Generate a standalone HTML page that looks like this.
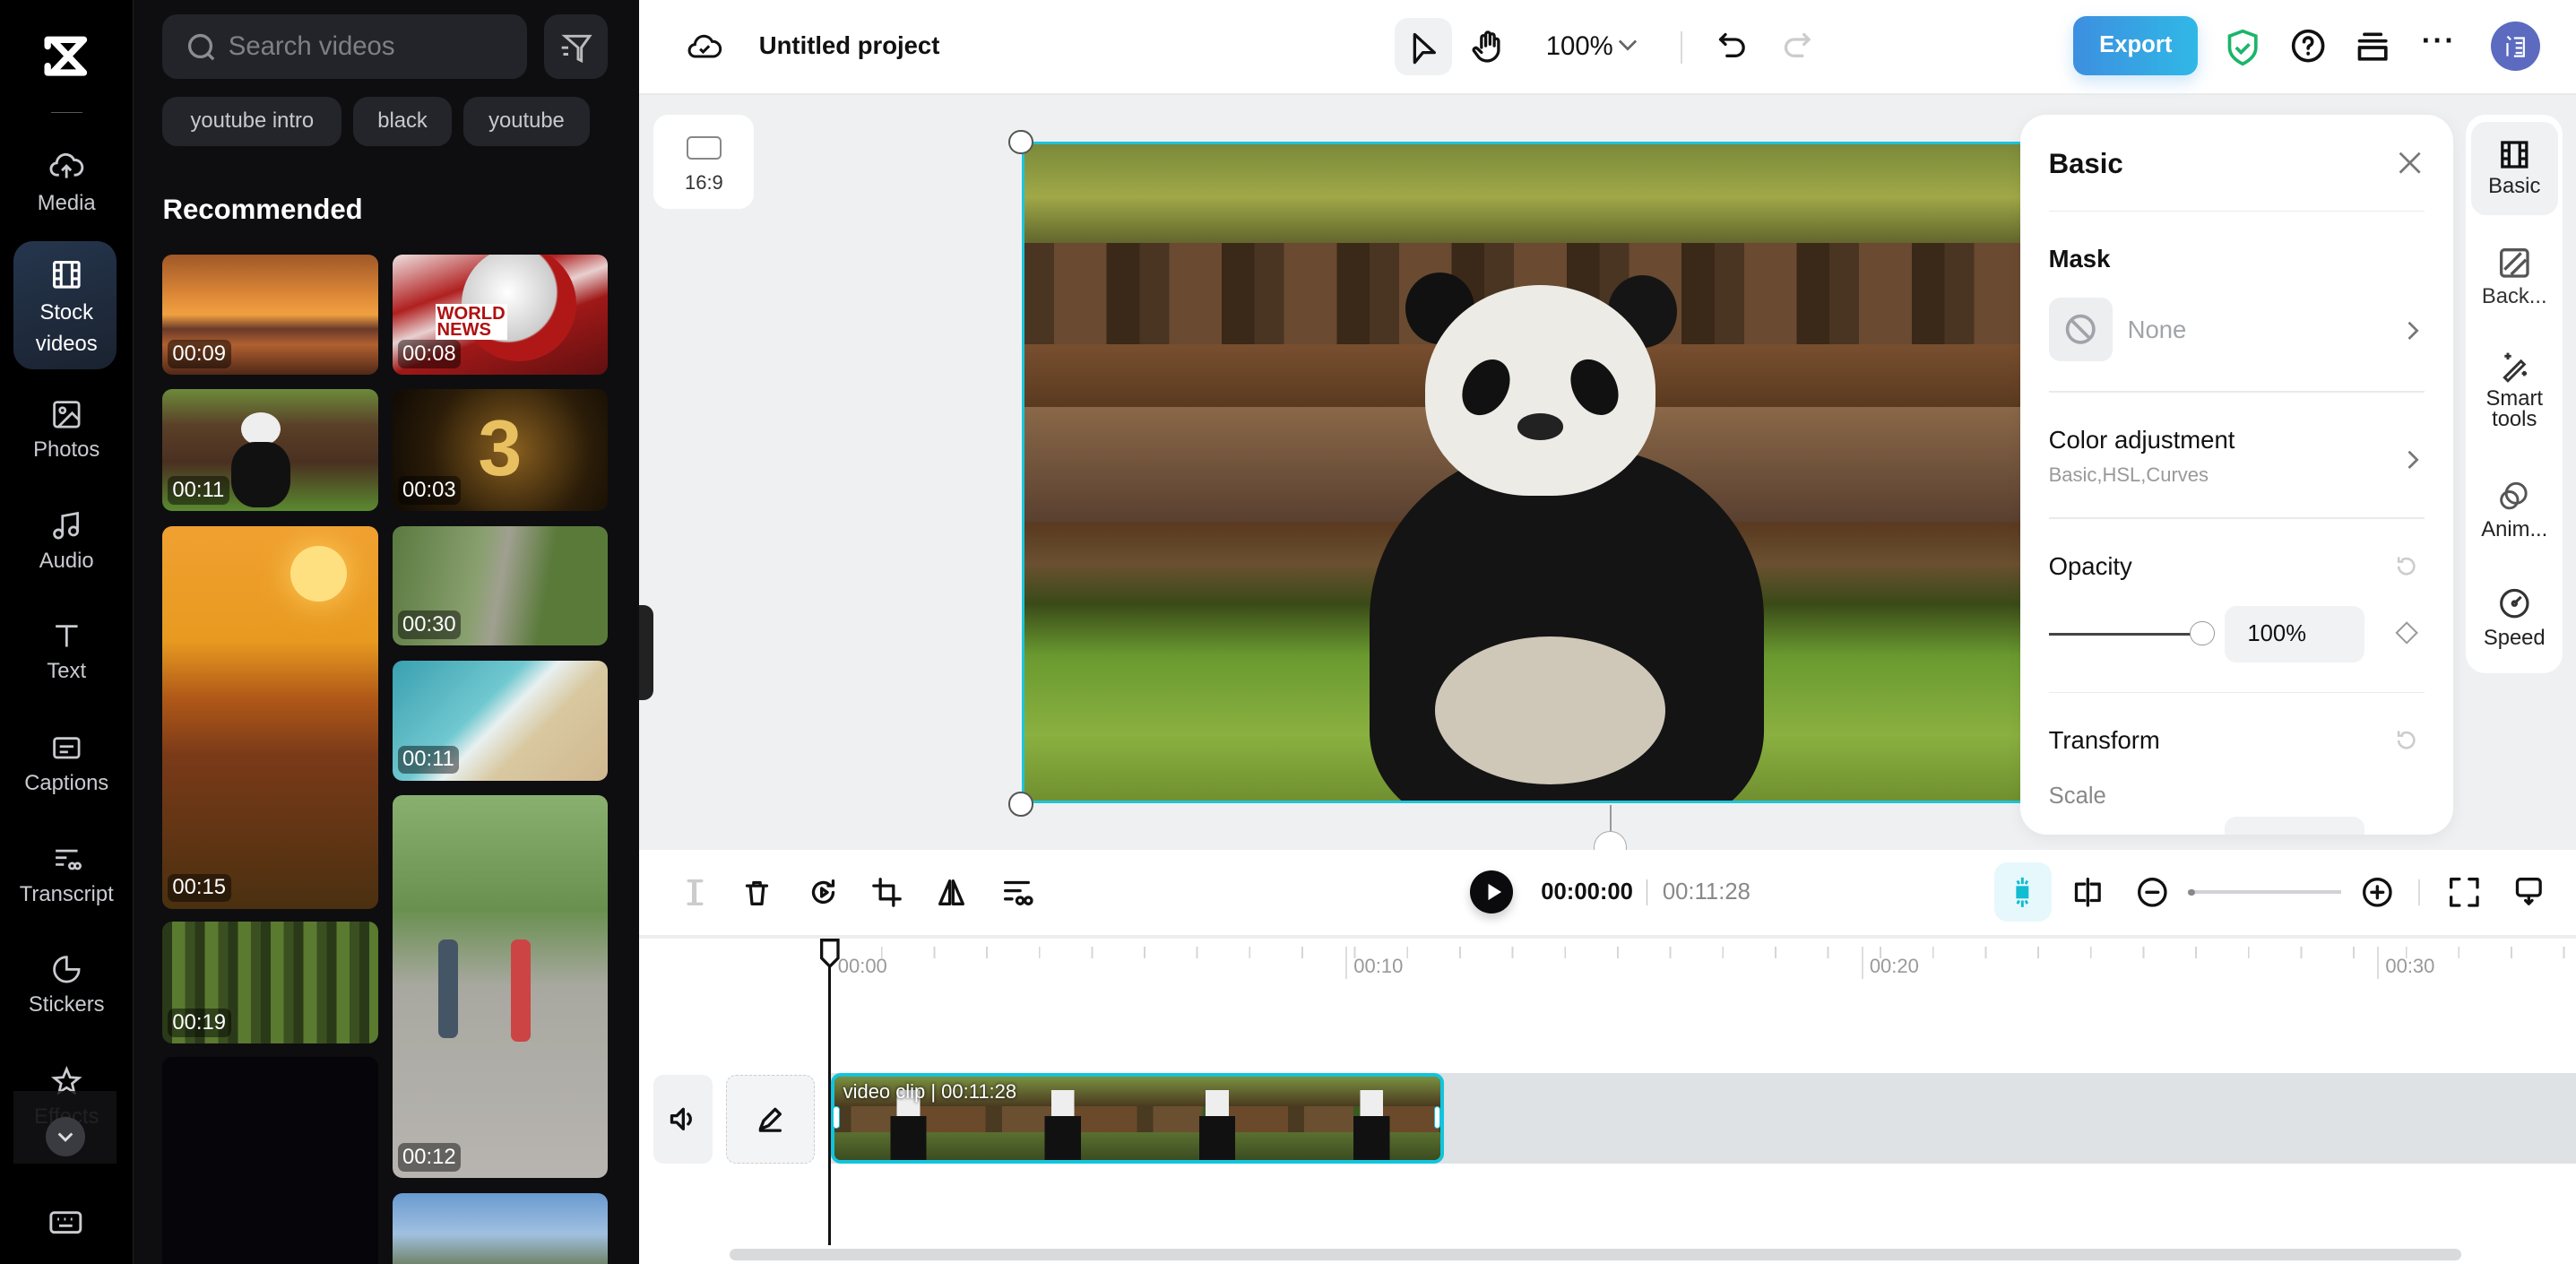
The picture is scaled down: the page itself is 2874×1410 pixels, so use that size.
<!DOCTYPE html>
<html><head><meta charset="utf-8"><style>
*{box-sizing:border-box;margin:0;padding:0}
html,body{width:2874px;height:1410px;overflow:hidden;background:#fff}
#r{position:absolute;left:0;top:0;width:1568px;height:769px;zoom:1.8329;font-family:"Liberation Sans",sans-serif;overflow:hidden}
.a{position:absolute}
.nav{color:#c9cbd0;font-size:13px;text-align:center;width:81px;left:0}
.nav svg{display:block;margin:0 auto 4px}
.chip{position:absolute;top:59px;height:30px;background:#24252b;border-radius:9px;color:#c7c9ce;font-size:13px;line-height:30px;text-align:center}
.th{position:absolute;border-radius:6px;overflow:hidden}
.th span{position:absolute;left:3px;bottom:4px;background:rgba(0,0,0,.45);color:#fff;font-size:13px;padding:1px 3px;border-radius:4px}
.ic{position:absolute;stroke:#111;fill:none;stroke-width:1.8;stroke-linecap:round;stroke-linejoin:round}
.sec{position:absolute;left:1247px;font-size:15px;font-weight:bold;color:#111}
.hr{position:absolute;left:1247px;width:229px;height:1px;background:#e9eaec}
.rt{position:absolute;left:1501px;width:59px;text-align:center;font-size:13px;color:#222}
.rt svg{display:block;margin:0 auto 3px}
.tl{position:absolute;top:581px;font-size:12px;color:#999}
</style></head><body><div id="r">
<!-- left nav -->
<div class="a" style="left:0;top:0;width:81px;height:769px;background:#000"></div>
<svg class="a" style="left:24px;top:20px" width="32" height="28" viewBox="0 0 32 28"><path d="M6 4h22L6 24h22M28 4L6 24" stroke="#fff" stroke-width="0" fill="none"/><path d="M5 4h22M5 24h22M8 4l19 20M27 4L8 24M5 4v4M5 20v4" stroke="#fff" stroke-width="4" fill="none" stroke-linecap="round" stroke-linejoin="round"/></svg>
<div class="a" style="left:31px;top:68px;width:19px;height:1px;background:#555"></div>
<div class="nav a" style="top:90px"><svg width="22" height="22" viewBox="0 0 24 24" fill="none" stroke="#c9cbd0" stroke-width="1.7"><path d="M7 18H6a4 4 0 0 1-.5-8A6 6 0 0 1 17 8a4.5 4.5 0 0 1 1 10h-1M12 20v-8M9 15l3-3 3 3"/></svg>Media</div>
<div class="a" style="left:8px;top:147px;width:63px;height:78px;border-radius:12px;background:linear-gradient(160deg,#25364d,#1a2230)"></div>
<div class="nav a" style="top:157px;color:#fff;line-height:19px"><svg width="20" height="20" viewBox="0 0 24 24" fill="none" stroke="#fff" stroke-width="2"><rect x="3" y="3" width="18" height="18" rx="1"/><path d="M8 3v18M16 3v18M3 9h5M3 15h5M16 9h5M16 15h5"/></svg>Stock<br>videos</div>
<div class="nav a" style="top:242px"><svg width="20" height="20" viewBox="0 0 24 24" fill="none" stroke="#c9cbd0" stroke-width="1.8"><rect x="3" y="3" width="18" height="18" rx="2"/><circle cx="9" cy="9" r="2"/><path d="M21 16l-5-5-10 10"/></svg>Photos</div>
<div class="nav a" style="top:310px"><svg width="20" height="20" viewBox="0 0 24 24" fill="none" stroke="#c9cbd0" stroke-width="1.8"><path d="M9 18V5l11-2v13"/><circle cx="6" cy="18" r="3"/><circle cx="17" cy="16" r="3"/></svg>Audio</div>
<div class="nav a" style="top:377px"><svg width="20" height="20" viewBox="0 0 24 24" fill="none" stroke="#c9cbd0" stroke-width="1.8"><path d="M4 5h16M12 5v15"/></svg>Text</div>
<div class="nav a" style="top:445px"><svg width="20" height="20" viewBox="0 0 24 24" fill="none" stroke="#c9cbd0" stroke-width="1.8"><rect x="3" y="5" width="18" height="14" rx="2"/><path d="M7 11h10M7 15h6"/></svg>Captions</div>
<div class="nav a" style="top:513px"><svg width="20" height="20" viewBox="0 0 24 24" fill="none" stroke="#c9cbd0" stroke-width="1.8"><path d="M4 6h16M4 11h8M4 16h6"/><circle cx="16" cy="17" r="2"/><circle cx="20" cy="17" r="2"/></svg>Transcript</div>
<div class="nav a" style="top:580px"><svg width="20" height="20" viewBox="0 0 24 24" fill="none" stroke="#c9cbd0" stroke-width="1.8"><path d="M12 3a9 9 0 1 0 9 9h-9z"/></svg>Stickers</div>
<div class="nav a" style="top:648px;color:#555"><svg width="20" height="20" viewBox="0 0 24 24" fill="none" stroke="#c9cbd0" stroke-width="1.8"><path d="M12 3l2.5 6 6.5.5-5 4 1.5 6.5-5.5-3.5-5.5 3.5 1.5-6.5-5-4 6.5-.5z"/></svg>Effects</div>
<div class="a" style="left:8px;top:664px;width:63px;height:44px;background:rgba(20,20,22,.8)"></div>
<div class="a" style="left:28px;top:680px;width:24px;height:24px;border-radius:50%;background:#3a3b40"></div>
<svg class="a" style="left:34px;top:687px" width="12" height="10" viewBox="0 0 12 10"><path d="M2 3l4 4 4-4" stroke="#ddd" stroke-width="1.6" fill="none"/></svg>
<svg class="a" style="left:30px;top:736px" width="20" height="16" viewBox="0 0 20 16" fill="none" stroke="#c9cbd0" stroke-width="1.6"><rect x="1" y="2" width="18" height="12" rx="2"/><path d="M5 6h1M9 6h1M13 6h1M6 10h8"/></svg>
<!-- panel -->
<div class="a" style="left:81px;top:0;width:308px;height:769px;background:#0e0e10;border-left:1px solid #222"></div>
<div class="a" style="left:99px;top:9px;width:222px;height:39px;background:#232429;border-radius:9px"></div>
<svg class="a" style="left:113px;top:19px" width="20" height="20" viewBox="0 0 20 20" fill="none" stroke="#8b8d93" stroke-width="1.8"><circle cx="9" cy="9" r="6.5"/><path d="M14 14l3 3"/></svg>
<div class="a" style="left:139px;top:19px;font-size:16px;color:#7d8088">Search videos</div>
<div class="a" style="left:331px;top:9px;width:39px;height:39px;background:#232429;border-radius:9px"></div>
<svg class="a" style="left:340px;top:18px" width="22" height="22" viewBox="0 0 22 22" fill="none" stroke="#bbb" stroke-width="1.6"><path d="M4 4h15l-5 7v8l-2-1v-7zM2 11h4M3 15h3"/></svg>
<div class="chip" style="left:99px;width:109px">youtube intro</div>
<div class="chip" style="left:215px;width:60px">black</div>
<div class="chip" style="left:282px;width:77px">youtube</div>
<div class="a" style="left:99px;top:118px;font-size:17px;font-weight:bold;color:#fff">Recommended</div>
<div class="th" style="left:99px;top:155px;width:131px;height:73px;background:linear-gradient(#a05828,#e08a38 35%,#f0a040 50%,#6a3a2a 62%,#b06030 75%,#502818)"><span>00:09</span></div>
<div class="th" style="left:239px;top:155px;width:131px;height:73px;background:linear-gradient(160deg,#f0e0e0,#b02020 30%,#e8d0d0 45%,#a01818 60%,#601010)"><span>00:08</span><div class="a" style="left:42px;top:-5px;width:70px;height:70px;border-radius:50%;background:radial-gradient(circle at 40% 40%,#fff,#ccc 50%,#b01818 52%)"></div><b class="a" style="left:26px;top:30px;background:#fff;color:#b01010;font-size:11px;line-height:10px;padding:1px">WORLD<br>NEWS</b></div>
<div class="th" style="left:99px;top:237px;width:131px;height:74px;background:linear-gradient(#6c8a3a,#5a4028 30%,#4a3020 60%,#5a8a30)"><span>00:11</span><div class="a" style="left:48px;top:14px;width:24px;height:20px;background:#eee;border-radius:50%"></div><div class="a" style="left:42px;top:32px;width:36px;height:40px;background:#111;border-radius:40%"></div></div>
<div class="th" style="left:239px;top:237px;width:131px;height:74px;background:radial-gradient(circle at 55% 50%,#8a6020,#2a1c08 60%,#100a04)"><span>00:03</span><b class="a" style="left:52px;top:8px;font-size:48px;color:#e8c060">3</b></div>
<div class="th" style="left:99px;top:320px;width:131px;height:233px;background:linear-gradient(#f0a030,#e89a20 30%,#b05818 45%,#7a3a18 60%,#4a3010 100%)"><span>00:15</span><div class="a" style="left:78px;top:12px;width:34px;height:34px;border-radius:50%;background:#ffe080;box-shadow:0 0 20px #ffd060"></div></div>
<div class="th" style="left:239px;top:320px;width:131px;height:73px;background:linear-gradient(100deg,#5a7a40,#8aa070 40%,#a0a090 50%,#5a7a3a 70%)"><span>00:30</span></div>
<div class="th" style="left:239px;top:402px;width:131px;height:73px;background:linear-gradient(135deg,#3aa0b0,#70c8d0 40%,#e8f0f0 50%,#d8c8a0 65%,#d0b890)"><span>00:11</span></div>
<div class="th" style="left:99px;top:561px;width:131px;height:74px;background:repeating-linear-gradient(90deg,#2a3a18 0 6px,#5a7a30 6px 14px,#3a5020 14px 20px)"><span>00:19</span></div>
<div class="th" style="left:239px;top:484px;width:131px;height:233px;background:linear-gradient(#8ab070,#6a9050 30%,#a8a8a0 50%,#b8b4b0)"><span>00:12</span><div class="a" style="left:28px;top:88px;width:12px;height:60px;background:#456;border-radius:4px"></div><div class="a" style="left:72px;top:88px;width:12px;height:62px;background:#c44;border-radius:4px"></div></div>
<div class="th" style="left:99px;top:643px;width:131px;height:130px;background:#05050a"></div>
<div class="th" style="left:239px;top:726px;width:131px;height:50px;background:linear-gradient(#6a9ad0,#a0c0e0 50%,#607040)"></div>
<!-- main -->
<div class="a" style="left:389px;top:58px;width:1179px;height:459px;background:#eef0f2"></div>
<div class="a" style="left:389px;top:368px;width:9px;height:58px;background:#222;border-radius:0 6px 6px 0"></div>
<!-- topbar -->
<svg class="a" style="left:418px;top:18px" width="22" height="20" viewBox="0 0 24 22" fill="none" stroke="#111" stroke-width="1.8"><path d="M7 18H6a4 4 0 0 1-.5-8A6 6 0 0 1 17 8a4.5 4.5 0 0 1 1 10H7z"/><path d="M9 13l2 2 4-4"/></svg>
<div class="a" style="left:462px;top:19px;font-size:15px;font-weight:bold;color:#111">Untitled project</div>
<div class="a" style="left:849px;top:11px;width:35px;height:35px;background:#f0f1f3;border-radius:8px"></div>
<svg class="ic" style="left:857px;top:18px" width="20" height="22" viewBox="0 0 20 22"><path d="M4 3l12 11h-7l-5 6z"/></svg>
<svg class="ic" style="left:895px;top:17px" width="22" height="22" viewBox="0 0 22 22"><path d="M7 12V6a1.3 1.3 0 0 1 2.6 0v5M9.6 10V4a1.3 1.3 0 0 1 2.6 0v6M12.2 10V5a1.3 1.3 0 0 1 2.6 0v6M14.8 11V8a1.3 1.3 0 0 1 2.6 0v6a7 7 0 0 1-12 4l-3-4a1.3 1.3 0 0 1 2-1.5L7 15"/></svg>
<div class="a" style="left:941px;top:19px;font-size:16px;color:#111">100%</div>
<svg class="a" style="left:985px;top:22px" width="12" height="10" viewBox="0 0 12 10"><path d="M1 3l5 5 5-5" stroke="#666" stroke-width="1.5" fill="none"/></svg>
<div class="a" style="left:1023px;top:19px;width:1px;height:20px;background:#d8dadd"></div>
<svg class="ic" style="left:1044px;top:18px" width="20" height="20" viewBox="0 0 20 20"><path d="M6 3L3 6l3 3M3 6h9a5 5 0 0 1 0 10H7"/></svg>
<svg class="ic" style="left:1084px;top:18px;stroke:#ccc" width="20" height="20" viewBox="0 0 20 20"><path d="M14 3l3 3-3 3M17 6H8a5 5 0 0 0 0 10h5"/></svg>
<div class="a" style="left:1262px;top:10px;width:76px;height:36px;border-radius:8px;background:linear-gradient(90deg,#3d8fe0,#30b8e6);color:#fff;font-size:14px;font-weight:bold;line-height:36px;text-align:center;box-shadow:0 4px 10px rgba(50,150,230,.25)">Export</div>
<svg class="a" style="left:1354px;top:17px" width="22" height="24" viewBox="0 0 22 24" fill="none" stroke="#1bb56a" stroke-width="2"><path d="M11 2l8 3v7c0 5-4 8-8 10-4-2-8-5-8-10V5z"/><path d="M7 12l3 3 5-5"/></svg>
<svg class="ic" style="left:1394px;top:17px;stroke-width:2" width="22" height="22" viewBox="0 0 22 22"><circle cx="11" cy="11" r="9"/><path d="M8.5 8.5a2.5 2.5 0 1 1 3.5 2.3c-.8.4-1 .9-1 1.7M11 15.5v.3"/></svg>
<svg class="ic" style="left:1433px;top:17px;stroke-width:2" width="22" height="22" viewBox="0 0 22 22"><path d="M6 4h10M3 8h16M3 12h16v7H3z"/></svg>
<div class="a" style="left:1474px;top:14px;font-size:18px;font-weight:bold;color:#111;letter-spacing:1px">···</div>
<div class="a" style="left:1516px;top:13px;width:30px;height:30px;border-radius:50%;background:#5c6bc0"></div>
<svg class="a" style="left:1523px;top:20px" width="16" height="16" viewBox="0 0 16 16" fill="none" stroke="#fff" stroke-width="1.2"><path d="M3 2l2 2M3 6v8M7 3h6v11H7M8 6h4M8 9h4M8 12h4"/></svg>
<div class="a" style="left:389px;top:57px;width:1179px;height:1px;background:#e8eaec"></div>
<!-- ratio -->
<div class="a" style="left:398px;top:70px;width:61px;height:57px;background:#fff;border-radius:9px"></div>
<div class="a" style="left:418px;top:83px;width:21px;height:14px;border:1.5px solid #888;border-radius:3px"></div>
<div class="a" style="left:398px;top:104px;width:61px;text-align:center;font-size:12px;color:#333">16:9</div>
<!-- video -->
<div class="a" style="left:622px;top:86px;width:620px;height:403px;overflow:hidden;border:2px solid #1ec4d8;background:linear-gradient(#7a8a3a,#a0a848 8%,#6a7030 14%,#5a4a2a 18%,#7a5030 30%,#5a3a20 40%,#8a6040 48%,#5a3a20 58%,#6a5030 64%,#3a4a18 70%,#6a9a30 78%,#8ab040 90%,#709030)">
 <div class="a" style="left:0;top:60px;width:620px;height:62px;background:repeating-linear-gradient(90deg,#4a3422 0 18px,#6a4a30 18px 50px,#3a2818 50px 70px)"></div>
 <div class="a" style="left:0;top:160px;width:620px;height:70px;background:linear-gradient(#8a6848,#5a4030)"></div>
 <div class="a" style="left:232px;top:78px;width:42px;height:44px;background:#111;border-radius:50%"></div>
 <div class="a" style="left:355px;top:80px;width:42px;height:44px;background:#151515;border-radius:50%"></div>
 <div class="a" style="left:210px;top:185px;width:240px;height:230px;background:#141414;border-radius:45% 45% 25% 25%"></div>
 <div class="a" style="left:244px;top:86px;width:140px;height:128px;background:#ecebe6;border-radius:50% 50% 45% 45%"></div>
 <div class="a" style="left:268px;top:130px;width:26px;height:36px;background:#111;border-radius:50%;transform:rotate(30deg)"></div>
 <div class="a" style="left:334px;top:130px;width:26px;height:36px;background:#111;border-radius:50%;transform:rotate(-30deg)"></div>
 <div class="a" style="left:300px;top:164px;width:28px;height:16px;background:#222;border-radius:50%"></div>
 <div class="a" style="left:250px;top:300px;width:140px;height:90px;background:#cfc8b8;border-radius:50%"></div>
</div>
<div class="a" style="left:614px;top:79px;width:15px;height:15px;border-radius:50%;background:#fff;border:1.5px solid #555"></div>
<div class="a" style="left:614px;top:482px;width:15px;height:15px;border-radius:50%;background:#fff;border:1.5px solid #555"></div>
<div class="a" style="left:980px;top:490px;width:1px;height:18px;background:#999"></div>
<div class="a" style="left:970px;top:506px;width:20px;height:20px;border-radius:50%;background:#fff;border:1px solid #aaa"></div>
<!-- basic panel -->
<div class="a" style="left:1230px;top:70px;width:263px;height:438px;background:#fff;border-radius:16px;box-shadow:0 2px 10px rgba(0,0,0,.06)"></div>
<div class="sec" style="top:90px;font-size:17px">Basic</div>
<svg class="a" style="left:1459px;top:91px" width="16" height="16" viewBox="0 0 16 16"><path d="M2 2l12 12M14 2L2 14" stroke="#777" stroke-width="1.5"/></svg>
<div class="hr" style="top:128px"></div>
<div class="sec" style="top:149px">Mask</div>
<div class="a" style="left:1247px;top:181px;width:39px;height:39px;border-radius:7px;background:#eceef0"></div>
<svg class="a" style="left:1256px;top:190px" width="21" height="21" viewBox="0 0 21 21" fill="none" stroke="#a0a4aa" stroke-width="2"><circle cx="10.5" cy="10.5" r="8"/><path d="M5 5l11 11"/></svg>
<div class="a" style="left:1295px;top:192px;font-size:15px;color:#a0a4aa">None</div>
<svg class="a" style="left:1463px;top:194px" width="10" height="14" viewBox="0 0 10 14"><path d="M3 2l5 5-5 5" stroke="#777" stroke-width="1.5" fill="none"/></svg>
<div class="hr" style="top:238px"></div>
<div class="sec" style="top:259px;font-weight:normal;color:#111">Color adjustment</div>
<div class="a" style="left:1247px;top:282px;font-size:12px;color:#999">Basic,HSL,Curves</div>
<svg class="a" style="left:1463px;top:273px" width="10" height="14" viewBox="0 0 10 14"><path d="M3 2l5 5-5 5" stroke="#777" stroke-width="1.5" fill="none"/></svg>
<div class="hr" style="top:315px"></div>
<div class="sec" style="top:336px;font-weight:normal">Opacity</div>
<svg class="a" style="left:1457px;top:337px" width="15" height="15" viewBox="0 0 16 16" fill="none" stroke="#ccc" stroke-width="1.5"><path d="M3 8a5 5 0 1 0 2-4M3 2v3h3"/></svg>
<div class="a" style="left:1247px;top:385px;width:94px;height:2px;background:#444"></div>
<div class="a" style="left:1333px;top:378px;width:15px;height:15px;border-radius:50%;background:#fff;border:1px solid #999"></div>
<div class="a" style="left:1354px;top:369px;width:85px;height:34px;border-radius:7px;background:#f1f2f4;font-size:14px;line-height:34px;padding-left:14px;color:#111">100%</div>
<div class="a" style="left:1460px;top:380px;width:10px;height:10px;border:1.3px solid #999;transform:rotate(45deg)"></div>
<div class="hr" style="top:421px"></div>
<div class="sec" style="top:442px;font-weight:normal">Transform</div>
<svg class="a" style="left:1457px;top:443px" width="15" height="15" viewBox="0 0 16 16" fill="none" stroke="#ccc" stroke-width="1.5"><path d="M3 8a5 5 0 1 0 2-4M3 2v3h3"/></svg>
<div class="a" style="left:1247px;top:477px;font-size:14px;color:#888">Scale</div>
<div class="a" style="left:1354px;top:497px;width:85px;height:11px;border-radius:7px 7px 0 0;background:#f1f2f4"></div>
<!-- right tabs -->
<div class="a" style="left:1501px;top:70px;width:59px;height:340px;background:#fff;border-radius:12px"></div>
<div class="a" style="left:1504px;top:74px;width:53px;height:57px;background:#f0f1f3;border-radius:9px"></div>
<div class="rt" style="top:85px"><svg width="20" height="18" viewBox="0 0 24 22" fill="none" stroke="#111" stroke-width="2.2"><rect x="3" y="2" width="18" height="18"/><path d="M8 2v18M16 2v18M3 8h5M3 14h5M16 8h5M16 14h5"/></svg>Basic</div>
<div class="rt" style="top:150px;color:#333"><svg width="20" height="20" viewBox="0 0 20 20" fill="none" stroke="#555" stroke-width="1.8"><rect x="2" y="2" width="16" height="16" rx="2"/><path d="M4 14L14 4M8 17l9-9"/></svg>Back...</div>
<div class="rt" style="top:213px;line-height:13px"><svg width="20" height="20" viewBox="0 0 20 20" fill="none" stroke="#333" stroke-width="1.6"><path d="M4 17l10-10 2 2L6 19zM6 2v4M4 4h4M16 13v3M14.5 14.5h3"/></svg>Smart<br>tools</div>
<div class="rt" style="top:290px"><svg width="20" height="22" viewBox="0 0 20 20" fill="none" stroke="#555" stroke-width="1.6"><circle cx="11" cy="9" r="6"/><circle cx="7" cy="13" r="5"/></svg>Anim...</div>
<div class="rt" style="top:356px"><svg width="20" height="22" viewBox="0 0 20 20" fill="none" stroke="#333" stroke-width="1.7"><circle cx="10" cy="10" r="8"/><path d="M10 10l4-4"/><circle cx="10" cy="10" r="1.2"/></svg>Speed</div>
<!-- timeline toolbar -->
<div class="a" style="left:389px;top:517px;width:1179px;height:252px;background:#fff"></div>
<div class="a" style="left:389px;top:569px;width:1179px;height:2px;background:#eceef0"></div>
<svg class="ic" style="left:414px;top:534px;stroke:#ccc" width="18" height="18" viewBox="0 0 18 18"><path d="M5 2h3v14H5M10 2h3M10 16h3M9 2v14"/></svg>
<svg class="ic" style="left:452px;top:534px" width="18" height="18" viewBox="0 0 18 18"><path d="M3 5h12M7 5V3h4v2M5 5l1 11h6l1-11"/></svg>
<svg class="ic" style="left:492px;top:534px" width="18" height="18" viewBox="0 0 18 18"><path d="M15 9a6 6 0 1 1-2-4.5M15 2v3h-3"/><path d="M8 6.5v5l3.5-2.5z"/></svg>
<svg class="ic" style="left:531px;top:534px" width="18" height="18" viewBox="0 0 18 18"><path d="M5 1v12h12M1 5h12v12"/></svg>
<svg class="ic" style="left:570px;top:534px" width="18" height="18" viewBox="0 0 18 18"><path d="M8 2v14H2zM10 2v14h6z"/></svg>
<svg class="ic" style="left:610px;top:534px" width="20" height="18" viewBox="0 0 20 18"><path d="M2 3h14M2 8h9M2 13h4"/><circle cx="11" cy="14" r="2"/><circle cx="16" cy="14" r="2"/></svg>
<div class="a" style="left:895px;top:530px;width:26px;height:26px;border-radius:50%;background:#0b0b0d;box-shadow:0 3px 6px rgba(0,0,0,.2)"></div>
<svg class="a" style="left:903px;top:537px" width="12" height="12" viewBox="0 0 12 12"><path d="M3 1l8 5-8 5z" fill="#fff"/></svg>
<div class="a" style="left:938px;top:535px;font-size:14px;font-weight:bold;color:#111">00:00:00</div>
<div class="a" style="left:1002px;top:535px;width:1px;height:16px;background:#bbb"></div>
<div class="a" style="left:1012px;top:535px;font-size:14px;color:#888">00:11:28</div>
<div class="a" style="left:1214px;top:525px;width:35px;height:36px;border-radius:8px;background:#e6f8fb"></div>
<svg class="a" style="left:1221px;top:533px" width="20" height="20" viewBox="0 0 20 20" fill="none" stroke="#12bcd2" stroke-width="1.6"><rect x="7" y="7" width="6" height="6" fill="#12bcd2"/><path d="M10 1v4M10 15v4M7 3l1 2M13 3l-1 2M7 17l1-2M13 17l-1-2"/></svg>
<svg class="ic" style="left:1261px;top:533px" width="20" height="20" viewBox="0 0 20 20"><path d="M10 2v16M8 5H3v10h5M12 5h5v10h-5"/></svg>
<svg class="ic" style="left:1300px;top:533px" width="20" height="20" viewBox="0 0 20 20"><circle cx="10" cy="10" r="8"/><path d="M6.5 10h7"/></svg>
<div class="a" style="left:1332px;top:542px;width:93px;height:2px;background:#d0d2d6"></div>
<div class="a" style="left:1332px;top:541px;width:4px;height:4px;background:#888;border-radius:2px"></div>
<svg class="ic" style="left:1437px;top:533px" width="20" height="20" viewBox="0 0 20 20"><circle cx="10" cy="10" r="8"/><path d="M6.5 10h7M10 6.5v7"/></svg>
<div class="a" style="left:1472px;top:535px;width:1px;height:16px;background:#ddd"></div>
<svg class="ic" style="left:1490px;top:533px" width="20" height="20" viewBox="0 0 20 20"><path d="M2 7V2h5M13 2h5v5M18 13v5h-5M7 18H2v-5"/></svg>
<svg class="ic" style="left:1529px;top:533px" width="20" height="20" viewBox="0 0 20 20"><rect x="3" y="2" width="14" height="10" rx="2"/><path d="M10 12v4M8 15l2 2 2-2"/></svg>
<!-- ruler -->
<div class="tl" style="left:510px">00:00</div>
<div class="tl" style="left:824px">00:10</div>
<div class="tl" style="left:1138px">00:20</div>
<div class="tl" style="left:1452px">00:30</div>
<div class="a" style="left:819px;top:576px;width:1px;height:20px;background:#ddd"></div>
<div class="a" style="left:1133px;top:576px;width:1px;height:20px;background:#ddd"></div>
<div class="a" style="left:1447px;top:576px;width:1px;height:20px;background:#ddd"></div>
<div class="a" style="left:505px;top:576px;width:1063px;height:7px;background:repeating-linear-gradient(90deg,transparent 0 31px,#d6d6d6 31px 32px)"></div>
<!-- track -->
<div class="a" style="left:398px;top:654px;width:36px;height:54px;border-radius:6px;background:#f0f1f3"></div>
<svg class="ic" style="left:406px;top:671px" width="20" height="20" viewBox="0 0 20 20"><path d="M3 8h3l4-4v12l-4-4H3zM13 7a4 4 0 0 1 0 6"/></svg>
<div class="a" style="left:442px;top:654px;width:54px;height:54px;border-radius:6px;background:#f3f4f6;border:1px dashed #ccc"></div>
<svg class="ic" style="left:459px;top:671px" width="20" height="20" viewBox="0 0 20 20"><path d="M4 16l2-5 7-7 3 3-7 7zM4 17h12"/></svg>
<div class="a" style="left:505px;top:653px;width:1063px;height:55px;background:#dee2e5"></div>
<div class="a" style="left:506px;top:653px;width:373px;height:55px;border:2.5px solid #12c4dc;border-radius:6px;overflow:hidden;background:repeating-linear-gradient(90deg,#4a3a22 0 10px,#6a5030 10px 40px,#3a5a20 40px 48px,#6a4a2a 48px 92px)">
 <div class="a" style="left:0;top:0;width:370px;height:18px;background:linear-gradient(#7a9040,#4a3a20)"></div>
 <div class="a" style="left:0;top:34px;width:370px;height:18px;background:linear-gradient(#5a7030,#3a4a20)"></div>
 <div class="a" style="left:30px;top:8px;width:310px;height:44px;background:repeating-linear-gradient(90deg,transparent 0 8px,#eee 8px 22px,transparent 22px 94px)"></div>
 <div class="a" style="left:30px;top:24px;width:310px;height:30px;background:repeating-linear-gradient(90deg,transparent 0 4px,#111 4px 26px,transparent 26px 94px)"></div>
 <div class="a" style="left:5px;top:2px;font-size:12px;color:#fff;text-shadow:0 0 2px #000">video clip | 00:11:28</div>
</div>
<div class="a" style="left:507px;top:673px;width:4px;height:14px;background:#fff;border:1px solid #12c4dc;border-radius:2px"></div>
<div class="a" style="left:873px;top:673px;width:4px;height:14px;background:#fff;border:1px solid #12c4dc;border-radius:2px"></div>
<div class="a" style="left:504px;top:584px;width:1.5px;height:174px;background:#111"></div>
<svg class="a" style="left:498px;top:570px" width="14" height="20" viewBox="0 0 14 20"><path d="M2 2h10v11l-5 5-5-5z" fill="#fff" stroke="#111" stroke-width="1.8"/></svg>
<div class="a" style="left:444px;top:760px;width:1054px;height:7px;border-radius:4px;background:#d9dadc"></div>
</div></body></html>
